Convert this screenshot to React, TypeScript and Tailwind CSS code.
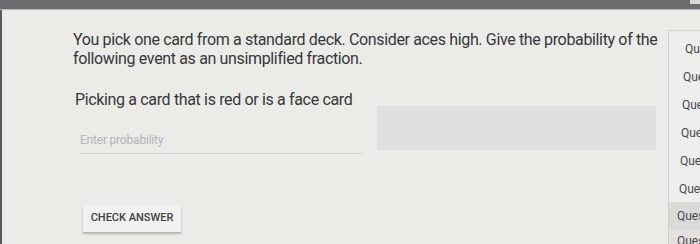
import React from "react";

export default function App() {
  const items = [
    { t: "Question 1", pl: "pl-[16px]" },
    { t: "Question 2", pl: "pl-[14px]" },
    { t: "Question 3", pl: "pl-[13px]" },
    { t: "Question 4", pl: "pl-[12px]" },
    { t: "Question 5", pl: "pl-[11px]" },
    { t: "Question 6", pl: "pl-[10px]" },
  ];
  return (
    <div className="w-[700px] h-[244px] overflow-hidden bg-[#ebebe8] flex flex-col" style={{ fontFamily: "Roboto, 'Liberation Sans', sans-serif" }}>
      <div className="h-[10px] shrink-0 bg-[#6c6c70] border-b border-[#b8b8b6] flex justify-end">
        <div className="w-[10px] h-[4px] bg-[#d8d8d8]" />
      </div>
      <div className="flex flex-1 border-l-2 border-[#5a5a5a] min-h-0">
        <div className="flex-1 flex flex-col pl-[71px] pt-[20px]">
          <p className="text-[16px] leading-[19px] tracking-[-0.35px] text-[#37373a] w-[595px]">
            You pick one card from a standard deck. Consider aces high. Give the probability of the following event as an unsimplified fraction.
          </p>
          <p className="mt-[22px] text-[16px] leading-[19px] tracking-[-0.35px] text-[#37373a] pl-[2px]">
            Picking a card that is red or is a face card
          </p>
          <div className="flex mt-[-3px]">
            <div className="w-[282px] ml-[7px] mt-[21px] self-start border-b border-[#d4d4d2] pb-[2px]">
              <span className="text-[12px] tracking-[-0.2px] text-[#b4b4b6]">Enter probability</span>
            </div>
            <div className="ml-[15px] w-[279px] h-[44px] bg-[#e0e0de]" />
          </div>
          <div className="mt-[51px] ml-[10px] w-[98px] h-[27px] bg-[#f1f1ef] shadow-[0_2px_2px_rgba(0,0,0,0.25)] flex items-center justify-center">
            <span className="text-[11px] font-medium text-[#3f3f45]">CHECK ANSWER</span>
          </div>
        </div>
        <div className="w-[32px] mt-[20px] border-l border-t border-[#cfcfcd] bg-[#eeeeec] flex flex-col overflow-hidden">
          <div className="h-[4px] shrink-0" />
          {items.map((it, i) => (
            <div key={i} className={`h-[28px] shrink-0 flex items-center ${it.pl} text-[12px] text-[#4a4a4e] whitespace-nowrap`}>{it.t}</div>
          ))}
          <div className="h-[28px] shrink-0 -mt-[1px] bg-[#dadad7] flex items-center pl-[8px] text-[12px] text-[#4a4a4e] whitespace-nowrap">Question 7</div>
          <div className="h-[20px] shrink-0 bg-[#e4e0dd] pl-[8px] pt-[2px] text-[12px] text-[#4a4a4e] whitespace-nowrap">Question 8</div>
        </div>
      </div>
    </div>
  );
}
